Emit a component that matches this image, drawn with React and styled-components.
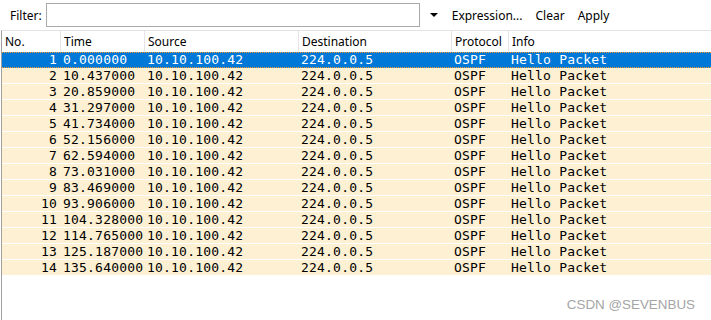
import React from 'react';
import styled, { createGlobalStyle } from 'styled-components';

const packets = [
  [1, '0.000000'],
  [2, '10.437000'],
  [3, '20.859000'],
  [4, '31.297000'],
  [5, '41.734000'],
  [6, '52.156000'],
  [7, '62.594000'],
  [8, '73.031000'],
  [9, '83.469000'],
  [10, '93.906000'],
  [11, '104.328000'],
  [12, '114.765000'],
  [13, '125.187000'],
  [14, '135.640000'],
].map(([no, time]) => ({
  no,
  time,
  source: '10.10.100.42',
  destination: '224.0.0.5',
  protocol: 'OSPF',
  info: 'Hello Packet',
}));

const columns = [
  { key: 'no', label: 'No.', width: 60, align: 'right' },
  { key: 'time', label: 'Time', width: 84 },
  { key: 'source', label: 'Source', width: 154 },
  { key: 'destination', label: 'Destination', width: 153 },
  { key: 'protocol', label: 'Protocol', width: 57 },
  { key: 'info', label: 'Info', width: 203 },
];

const GlobalStyle = createGlobalStyle`
  html, body {
    margin: 0;
    padding: 0;
    background: #fff;
  }
  body {
    width: 711px;
    height: 320px;
    overflow: hidden;
    font-family: "Noto Sans", "Liberation Sans", sans-serif;
  }
`;

const Window = styled.div`
  width: 711px;
  height: 320px;
  display: flex;
  flex-direction: column;
  position: relative;
  background: #fff;
`;

const Toolbar = styled.div`
  height: 30px;
  display: flex;
  align-items: center;
  padding: 0 0 0 10px;
  box-sizing: border-box;
  font-size: 12px;
  color: #000;
`;

const Label = styled.span`
  margin-right: 4px;
`;

const FilterInput = styled.div`
  width: 372px;
  height: 22px;
  border: 1px solid #a9a9a9;
  background: #fff;
`;

const DropArrow = styled.span`
  width: 0;
  height: 0;
  margin: 0 14px 0 10px;
  border-left: 4px solid transparent;
  border-right: 4px solid transparent;
  border-top: 4px solid #000;
`;

const ToolButton = styled.span`
  margin-right: 13px;
`;

const Pane = styled.div`
  flex: 1;
  display: flex;
  flex-direction: column;
  border-left: 1px solid #a0a0a0;
  border-top: 1px solid #e3e3e3;
  margin-left: 1px;
`;

const Row = styled.div`
  display: flex;
  box-sizing: border-box;
  height: ${p => (p.header ? 21 : 16)}px;
  align-items: center;
  background: ${p => (p.header ? '#fff' : p.selected ? '#0078d7' : '#fdf0d3')};
  color: ${p => (p.selected ? '#fff' : '#000')};
  border-bottom: ${p => (p.header ? 'none' : p.selected ? '1px dotted #f39a2b' : '1px solid #fff')};
  border-top: ${p => (p.selected ? '1px dotted #f39a2b' : 'none')};
  font-family: ${p => (p.header ? '"Noto Sans", "Liberation Sans", sans-serif' : '"DejaVu Sans Mono", "Liberation Mono", monospace')};
  font-size: ${p => (p.header ? '12px' : '13px')};
  letter-spacing: ${p => (p.header ? 0 : '0.2px')};
`;

const Cell = styled.div`
  flex: 0 0 ${p => p.width}px;
  box-sizing: border-box;
  height: 100%;
  display: flex;
  align-items: center;
  justify-content: ${p => (p.align === 'right' ? 'flex-end' : 'flex-start')};
  padding: ${p => (p.align === 'right' ? '0 3px 1px 0' : '0 0 1px 3px')};
  white-space: nowrap;
  overflow: visible;
  border-left: ${p => (p.header && !p.first ? '1px solid #e5e5e5' : 'none')};
`;

const Watermark = styled.div`
  position: absolute;
  right: 16px;
  bottom: 8px;
  font-family: "Liberation Sans", Arial, sans-serif;
  font-size: 13.4px;
  color: #a5a5a5;
`;

export default function App() {
  return (
    <Window>
      <GlobalStyle />
      <Toolbar>
        <Label>Filter:</Label>
        <FilterInput />
        <DropArrow />
        <ToolButton>Expression...</ToolButton>
        <ToolButton>Clear</ToolButton>
        <ToolButton>Apply</ToolButton>
      </Toolbar>
      <Pane>
        <Row header>
          {columns.map((c, i) => (
            <Cell key={c.key} header first={i === 0} width={c.width - (i === 0 ? 2 : 0)}>
              {c.label}
            </Cell>
          ))}
        </Row>
        {packets.map((p, r) => (
          <Row key={p.no} selected={r === 0}>
            {columns.map((c, i) => (
              <Cell key={c.key} width={c.width - (i === 0 ? 2 : 0)} align={c.align}>
                {p[c.key]}
              </Cell>
            ))}
          </Row>
        ))}
      </Pane>
      <Watermark>CSDN @SEVENBUS</Watermark>
    </Window>
  );
}
